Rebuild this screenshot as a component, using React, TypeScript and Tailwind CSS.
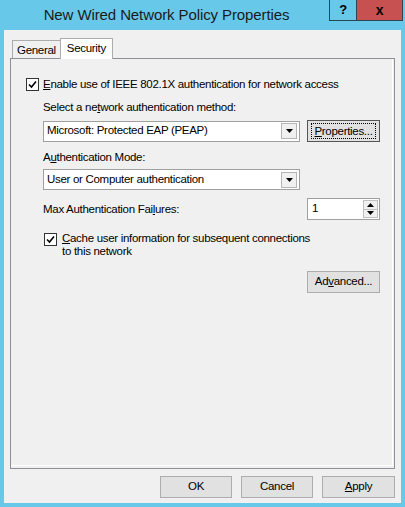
import type { ReactNode } from "react";

const font = { fontFamily: '"Liberation Sans", Arial, sans-serif' };

const CheckBox = () => (
  <span className="w-[13px] h-[13px] border border-[#333] bg-white flex items-center justify-center shrink-0">
    <svg width="9" height="9" viewBox="0 0 9 9">
      <path d="M1 4.5 L3.5 7 L8 1.5" stroke="#000" strokeWidth="1.6" fill="none" />
    </svg>
  </span>
);

const Arrow = ({ up = false }: { up?: boolean }) => (
  <svg width="7" height="4" viewBox="0 0 7 4">
    <path d={up ? "M0 4 L3.5 0 L7 4 Z" : "M0 0 L7 0 L3.5 4 Z"} fill="#000" />
  </svg>
);

const Combo = ({ value }: { value: string }) => (
  <div className="w-[257px] h-[21px] bg-white border border-[#a0a0a0] flex items-center justify-between pl-[3px] pr-[2px]">
    <span className="leading-none whitespace-nowrap">{value}</span>
    <span className="w-[16px] h-[16px] bg-[#f0f0f0] border border-[#b5b5b5] flex items-center justify-center">
      <Arrow />
    </span>
  </div>
);

const Btn = ({ children, def = false, w = "w-[73px]" }: { children: ReactNode; def?: boolean; w?: string }) => (
  <button
    className={`${w} h-[22px] bg-[#e1e1e1] border ${def ? "border-[#555]" : "border-[#adadad]"} flex items-center justify-center leading-none whitespace-nowrap`}
  >
    {def ? (
      <span className="border border-dotted border-black px-[2px] leading-[14px]">{children}</span>
    ) : (
      children
    )}
  </button>
);

export default function App() {
  return (
    <div
      className="w-[405px] h-[507px] bg-[#67c8ea] flex flex-col text-[11.5px] tracking-[-0.3px] text-black"
      style={font}
    >
      <div className="h-[30px] flex shrink-0">
        <div className="flex-1 text-center pt-[5px] pl-[4px] text-[15px] tracking-[-0.1px] leading-[20px] text-[#1b1b1b] whitespace-nowrap">
          New Wired Network Policy Properties
        </div>
        <div className="flex items-start pr-[2px]">
          <span className="w-[28px] h-[21px] border border-[#2d4553] border-t-0 flex items-center justify-center text-[13px] font-bold">
            ?
          </span>
          <span className="w-[46px] h-[21px] bg-[#c75050] border border-[#2d4553] border-l-0 border-t-0 flex items-center justify-center text-[14px] font-bold">
            x
          </span>
        </div>
      </div>

      <div className="flex-1 mx-[4px] mb-[4px] bg-[#f0f0f0] flex flex-col pl-[6px] pr-[6px] pt-[7px]">
        <div className="flex items-end h-[21px] pl-[2px]">
          <div className="h-[18px] px-[4px] border border-[#acacac] border-b-0 border-r-0 bg-[#f0f0f0] leading-[18px]">
            General
          </div>
          <div className="h-[21px] px-[6px] border border-[#acacac] border-b-0 bg-white leading-[18px] relative top-[1px]">
            Security
          </div>
        </div>
        <div className="h-[411px] border border-[#8f8f99] flex">
          <div className="flex-1 border-r border-b border-white mb-[2px] mr-[1px] flex flex-col pl-[15px] pt-[19px] pr-[12px]">
            <div className="flex items-center gap-[4px] h-[13px]">
              <CheckBox />
              <span className="leading-none whitespace-nowrap">
                <span className="underline">E</span>nable use of IEEE 802.1X authentication for network access
              </span>
            </div>

            <div className="pl-[17px] flex flex-col">
              <div className="mt-[9px] leading-[15px] whitespace-nowrap">
                Select a ne<span className="underline">t</span>work authentication method:
              </div>
              <div className="mt-[5px] flex items-center justify-between">
                <Combo value="Microsoft: Protected EAP (PEAP)" />
                <Btn def>
                  <span className="underline">P</span>roperties...
                </Btn>
              </div>
              <div className="mt-[8px] leading-[15px] whitespace-nowrap">
                A<span className="underline">u</span>thentication Mode:
              </div>
              <div className="mt-[4px] flex">
                <Combo value="User or Computer authentication" />
              </div>
              <div className="mt-[8px] flex items-center justify-between">
                <span className="leading-[15px] whitespace-nowrap">
                  Max Authentication Fai<span className="underline">l</span>ures:
                </span>
                <div className="w-[73px] h-[22px] bg-white border border-[#a0a0a0] flex items-center justify-between pl-[4px] pr-[1px]">
                  <span className="leading-none">1</span>
                  <div className="flex flex-col h-[18px] w-[15px]">
                    <span className="flex-1 bg-[#f0f0f0] border border-[#c0c0c0] flex items-center justify-center">
                      <Arrow up />
                    </span>
                    <span className="flex-1 bg-[#f0f0f0] border border-t-0 border-[#c0c0c0] flex items-center justify-center">
                      <Arrow />
                    </span>
                  </div>
                </div>
              </div>
              <div className="mt-[12px] flex items-start gap-[5px] pl-[1px]">
                <span className="mt-[1px]">
                  <CheckBox />
                </span>
                <span className="leading-[13px] whitespace-nowrap">
                  <span className="underline">C</span>ache user information for subsequent connections
                  <br />
                  to this network
                </span>
              </div>
              <div className="mt-[13px] flex justify-end">
                <Btn>
                  Ad<span className="underline">v</span>anced...
                </Btn>
              </div>
            </div>
          </div>
        </div>
        <div className="mt-[7px] flex justify-end gap-[9px]">
          <Btn w="w-[72px]">OK</Btn>
          <Btn w="w-[72px]">Cancel</Btn>
          <Btn w="w-[73px]">
            <span className="underline">A</span>pply
          </Btn>
        </div>
      </div>
    </div>
  );
}
